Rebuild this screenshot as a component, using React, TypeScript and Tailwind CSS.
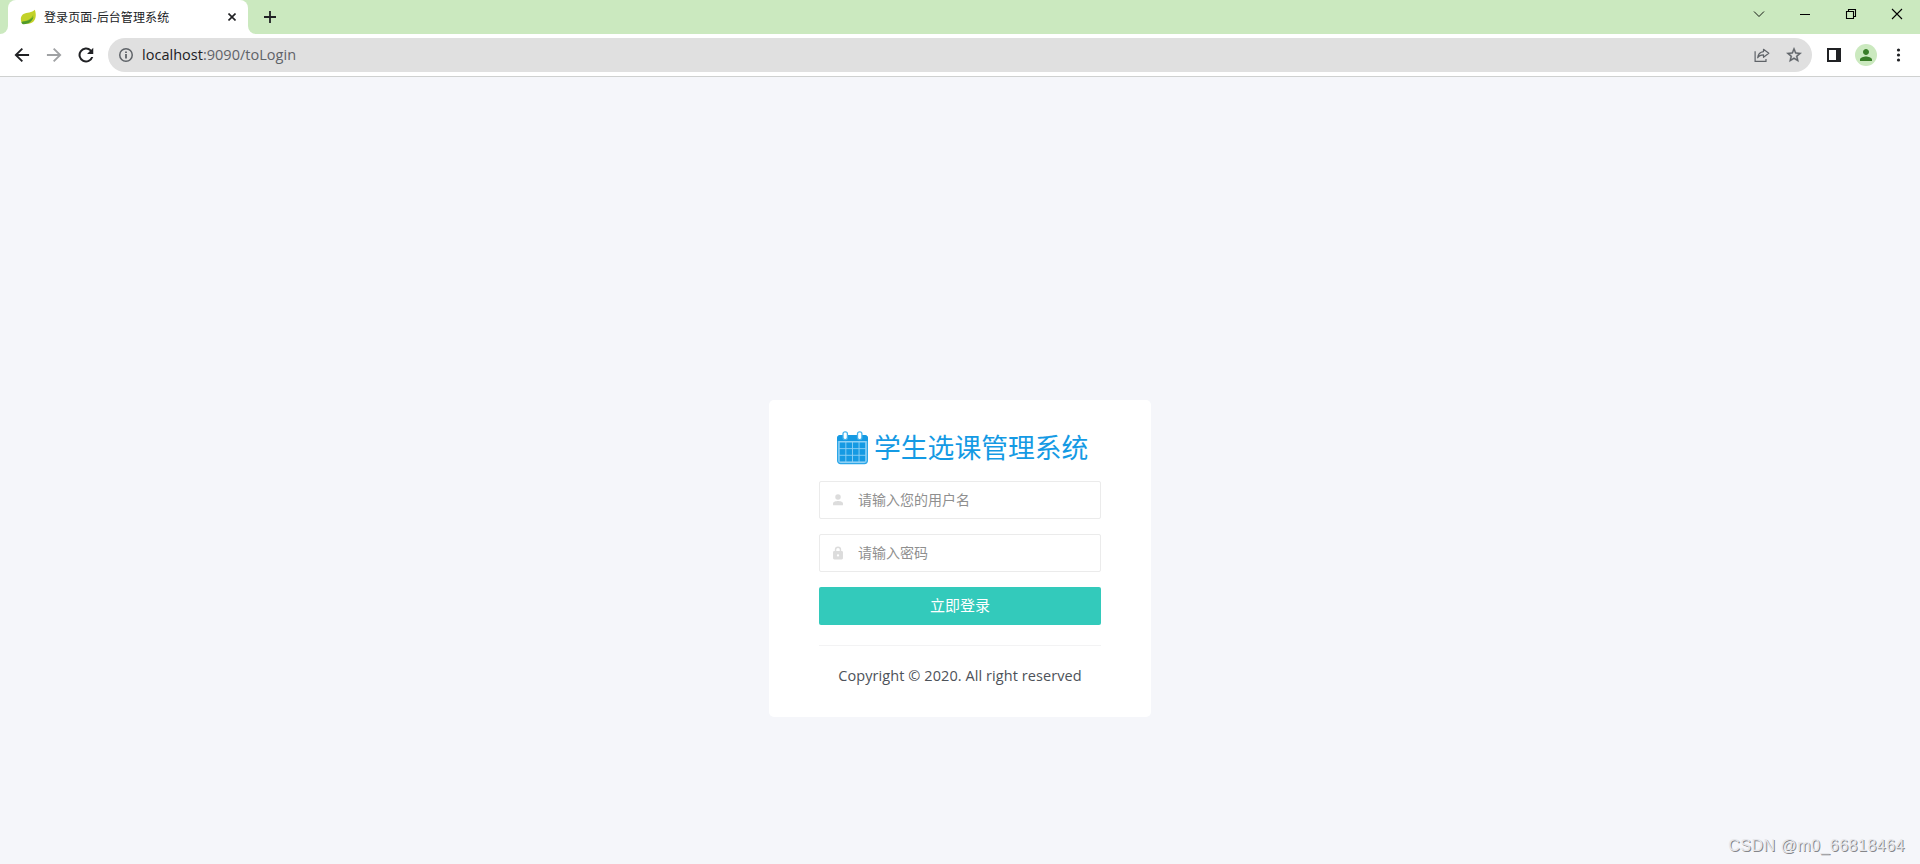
import React from "react";

const UI = "font-['Open_Sans','Noto_Sans_CJK_SC',sans-serif]";
const CJK = "font-['Noto_Sans_CJK_SC',sans-serif]";

function Svg({ size, box = "0 0 24 24", className = "", children }: { size: number; box?: string; className?: string; children: React.ReactNode }) {
  return (
    <svg width={size} height={size} viewBox={box} className={`block shrink-0 ${className}`} fill="currentColor">
      {children}
    </svg>
  );
}

function Leaf() {
  return (
    <svg width="17" height="17" viewBox="0 0 17 17" className="block shrink-0">
      <path d="M14.800 .8C16.300 5 16.300 9.500 13.500 12.500C10.800 15.200 5.500 15.200 1.800 14C.2 10.500 .6 6.800 3.500 5C7 3.200 12 4.200 14.800 .8Z" fill="#c3d229" />
      <path d="M2.500 12.600C7 12 11.300 10 13.300 5.500C13.500 10.500 9 13.400 3 13.300Z" fill="#8fbd1e" />
      <path d="M1.800 12.700C6 12.600 11 11.200 13.500 7.500C12.800 12 8.500 15.600 3 15.200C1.600 14.800 1.200 13.200 1.800 12.700Z" fill="#509a2c" />
    </svg>
  );
}

function Calendar() {
  const cols = [2.700, 9.300, 15.900, 22.500];
  const rows = [11.500, 18.100, 24.700];
  return (
    <svg width="31" height="34" viewBox="0 0 31 34" className="block shrink-0">
      <rect x="0.600" y="4.600" width="29.800" height="28" rx="3" fill="#8fd1f5" stroke="#2ba6e8" strokeWidth="1.200" />
      <path d="M0 10V7.500Q0 4 3.500 4H27.500Q31 4 31 7.500V10Z" fill="#159ae3" />
      {rows.map((y) => cols.map((x) => <rect key={`${x}-${y}`} x={x} y={y} width="5.700" height="5.700" fill="#159ae3" />))}
      <rect x="6" y="0.800" width="4.400" height="7.800" rx="2" fill="#fff" stroke="#45b2ec" strokeWidth="1.300" />
      <rect x="20.500" y="0.800" width="4.400" height="7.800" rx="2" fill="#fff" stroke="#45b2ec" strokeWidth="1.300" />
    </svg>
  );
}

function TabStrip() {
  return (
    <div className="flex h-[34px] shrink-0 bg-[#cbe9bf]">
      <div className="w-2 bg-white">
        <div className="h-full rounded-br-lg bg-[#cbe9bf]" />
      </div>
      <div className="flex w-[240px] items-center rounded-t-lg bg-white pl-3">
        <Leaf />
        <span className={`${CJK} ml-[7px] flex-1 whitespace-nowrap text-[12px] leading-4 tracking-[0.100px] text-[#202124]`}>登录页面-后台管理系统</span>
        <svg width="8" height="8" viewBox="0 0 8 8" className="mr-3 block shrink-0" stroke="#202124" strokeWidth="1.600">
          <path d="M.5 .5 7.500 7.500M7.500 .5 .5 7.500" />
        </svg>
      </div>
      <div className="flex-1 bg-white">
        <div className="flex h-full justify-between rounded-bl-lg bg-[#cbe9bf]">
          <svg width="12" height="12" viewBox="0 0 12 12" className="mt-[11px] ml-4 block" stroke="#202124" strokeWidth="1.800">
            <path d="M6 0V12M0 6H12" />
          </svg>
          <div className="mr-[17px] flex h-7 items-center text-black">
            <svg width="12" height="12" viewBox="0 0 12 12" className="block" fill="none" stroke="currentColor" strokeWidth="0.900">
              <path d="M1 3.500 6 8.500 11 3.500" />
            </svg>
            <svg width="12" height="12" viewBox="0 0 12 12" className="ml-[34px] block" fill="none" stroke="currentColor">
              <path d="M1 6.500H11" />
            </svg>
            <svg width="12" height="12" viewBox="0 0 12 12" className="ml-[34px] block" fill="none" stroke="currentColor" strokeWidth="1.100">
              <path d="M1.500 3.500H8.500V10.500H1.500ZM3.500 3.500V1.500H10.500V8.500H8.500" />
            </svg>
            <svg width="12" height="12" viewBox="0 0 12 12" className="ml-[34px] block" fill="none" stroke="currentColor" strokeWidth="1.100">
              <path d="M1 1 11 11M11 1 1 11" />
            </svg>
          </div>
        </div>
      </div>
    </div>
  );
}

function Toolbar() {
  return (
    <div className="flex h-[43px] shrink-0 items-start border-b border-[#cfd1d0] bg-white pt-1">
      <div className="flex h-[34px] items-center pl-3 text-[#202124]">
        <Svg size={20}>
          <path d="M20.500 10.900H7.400l5.800-5.800L11.600 3.500 3 12l8.600 8.500 1.600-1.600-5.800-5.800h13.100z" />
        </Svg>
        <Svg size={20} className="ml-3 text-[#a0a2a4]">
          <path d="M3.500 10.900h13.100l-5.800-5.800 1.600-1.600L21 12l-8.600 8.500-1.600-1.600 5.800-5.800H3.500z" />
        </Svg>
        <Svg size={20} className="ml-3">
          <path d="M18.400 5.600A9 9 0 1 0 20.700 14.500h-2.500A6.600 6.600 0 1 1 16.700 7.300L13.300 10.700H20.700V3.300Z" />
        </Svg>
      </div>
      <div className="ml-3 flex h-[34px] flex-1 items-center rounded-full bg-[#e0e0e0] pr-[9px] pl-[10px] text-[#5f6368]">
        <Svg size={16} box="0 0 16 16">
          <path d="M8 1a7 7 0 1 0 0 14A7 7 0 0 0 8 1Zm0 1.500a5.500 5.500 0 1 1 0 11 5.500 5.500 0 0 1 0-11ZM7.100 7.100h1.800V11.500H7.100ZM7.100 4.400h1.800v1.700H7.100Z" />
        </Svg>
        <span className={`${UI} ml-2 flex-1 text-[14.500px] leading-5 tracking-[0.020px]`}>
          <span className="text-[#202124]">localhost</span>
          <span>:9090/toLogin</span>
        </span>
        <svg width="16" height="15" viewBox="0 0 16 15" className="mr-[15px] block" fill="none" stroke="currentColor" strokeWidth="1.200">
          <path d="M1.100 3.200V13.400H12V11" />
          <path d="M9.500 1.300 14.800 5.300 9.500 9.300V6.800C6.500 6.800 4.800 7.800 3.700 9.800C4 6.500 6 4 9.500 3.600Z" strokeLinejoin="round" />
        </svg>
        <Svg size={18}>
          <path
            stroke="currentColor"
            strokeWidth="0.500"
            d="M22 9.240l-7.190-.62L12 2 9.190 8.630 2 9.240l5.460 4.730L5.820 21 12 17.270 18.180 21l-1.630-7.030L22 9.240zM12 15.400l-3.760 2.270 1-4.280-3.320-2.880 4.380-.38L12 6.100l1.710 4.040 4.380.38-3.320 2.880 1 4.280L12 15.400z"
          />
        </Svg>
      </div>
      <div className="flex h-[34px] items-center pr-[13px] pl-[15px]">
        <svg width="14" height="14" viewBox="0 0 14 14" className="block" fill="#202124">
          <path fillRule="evenodd" d="M0 0H14V14H0ZM2 2V12H9V2Z" />
        </svg>
        <div className="ml-[14px] flex size-[22px] items-center justify-center rounded-full bg-[#cbe9bf] text-[#397d28]">
          <Svg size={18}>
            <path d="M12 12c2.210 0 4-1.790 4-4s-1.790-4-4-4-4 1.790-4 4 1.790 4 4 4zm0 2c-2.670 0-8 1.340-8 4v2h16v-2c0-2.660-5.330-4-8-4z" />
          </Svg>
        </div>
        <svg width="18" height="18" viewBox="0 0 18 18" className="ml-[13px] -mr-[1px] block" fill="#202124">
          <circle cx="8.500" cy="4" r="1.600" />
          <circle cx="8.500" cy="9" r="1.600" />
          <circle cx="8.500" cy="14" r="1.600" />
        </svg>
      </div>
    </div>
  );
}

function Field({ icon, placeholder, type }: { icon: React.ReactNode; placeholder: string; type: string }) {
  return (
    <label className="mb-[15px] flex h-[38px] items-center rounded-[2px] border border-[#ebebeb] pl-[11px] text-[#dcdcdc]">
      {icon}
      <input
        type={type}
        placeholder={placeholder}
        className={`${CJK} ml-[13px] h-full min-w-0 flex-1 pb-[2px] text-[14px] text-[#333] outline-none placeholder:text-[#8f8f8f]`}
      />
    </label>
  );
}

function LoginCard() {
  return (
    <div className="flex h-[317px] w-[382px] flex-col rounded-[5px] bg-white px-[50px] pt-[31px]">
      <div className="flex h-[50px] items-start pl-[18px]">
        <Calendar />
        <h1 className={`${CJK} ml-[6px] whitespace-nowrap text-[26.800px] leading-[32px] font-normal text-[#149ae4]`}>学生选课管理系统</h1>
      </div>
      <Field
        type="text"
        placeholder="请输入您的用户名"
        icon={
          <Svg size={14}>
            <path d="M12 11.500a4.700 4.700 0 1 0 0-9.400 4.700 4.700 0 0 0 0 9.400ZM3.500 21v-3.500c0-2.700 5-4 8.500-4s8.500 1.300 8.500 4V21Z" />
          </Svg>
        }
      />
      <Field
        type="password"
        placeholder="请输入密码"
        icon={
          <Svg size={14}>
            <path d="M18.500 8.500H17.500V6.500a5.500 5.500 0 0 0-11 0v2H5.500a2 2 0 0 0-2 2V21a2 2 0 0 0 2 2h13a2 2 0 0 0 2-2V10.500a2 2 0 0 0-2-2ZM12 18a2 2 0 1 1 0-4 2 2 0 0 1 0 4Zm3-9.500H9v-2a3 3 0 0 1 6 0Z" />
          </Svg>
        }
      />
      <button className={`${CJK} h-[38px] shrink-0 rounded-[2px] bg-[#33cabb] pb-[2px] text-[15px] leading-[36px] text-white`}>立即登录</button>
      <hr className="mt-5 border-t border-[#f3f3f4]" />
      <p className={`${UI} mt-[19px] text-center text-[14.500px] leading-[22px] tracking-[0.080px] whitespace-nowrap text-[#4d5259]`}>
        Copyright © 2020. All right reserved
      </p>
    </div>
  );
}

export default function App() {
  return (
    <div className="relative flex h-[864px] w-[1920px] flex-col overflow-hidden bg-[#f5f6fa]">
      <TabStrip />
      <Toolbar />
      <main className="flex flex-1 items-start justify-center pt-[323px]">
        <LoginCard />
      </main>
      <span className="absolute right-[15px] bottom-[8px] font-['Liberation_Sans',sans-serif] text-[16px] leading-5 tracking-[0.500px] text-[#e6e7ea] [text-shadow:1px_1px_0_#85868a]">
        CSDN @m0_66818464
      </span>
    </div>
  );
}
